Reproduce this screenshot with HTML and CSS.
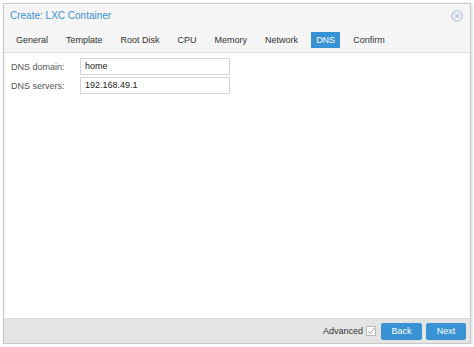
FILE: index.html
```html
<!DOCTYPE html>
<html>
<head>
<meta charset="utf-8">
<link rel="stylesheet" href="styles.css">
</head>
<body>
<div class="window">
  <div class="header">
    <div class="title">Create: LXC Container</div>
    <svg class="close" width="12" height="12" viewBox="0 0 12 12">
      <circle cx="6" cy="6" r="5.2" fill="none" stroke="#a9bfdc" stroke-width="1.1"/>
      <path d="M3.9 3.9 L8.1 8.1 M8.1 3.9 L3.9 8.1" stroke="#a9bfdc" stroke-width="1.1"/>
    </svg>
  </div>
  <div class="tabs">
    <span class="tab">General</span>
    <span class="tab">Template</span>
    <span class="tab">Root Disk</span>
    <span class="tab">CPU</span>
    <span class="tab">Memory</span>
    <span class="tab">Network</span>
    <span class="tab active">DNS</span>
    <span class="tab">Confirm</span>
  </div>
  <div class="content">
    <div class="row">
      <label class="label">DNS domain:</label>
      <div class="input">home</div>
    </div>
    <div class="row">
      <label class="label">DNS servers:</label>
      <div class="input">192.168.49.1</div>
    </div>
  </div>
  <div class="footer">
    <span class="adv">Advanced</span>
    <svg class="check" width="10" height="10" viewBox="0 0 10 10">
      <rect x="0.5" y="0.5" width="9" height="9" fill="#fff" stroke="#b8b8b8"/>
      <path d="M2 5.2 L4.2 7.4 L8.6 2" fill="none" stroke="#9a9a9a" stroke-width="1"/>
    </svg>
    <button class="btn back">Back</button>
    <button class="btn next">Next</button>
  </div>
</div>
</body>
</html>
```

FILE: styles.css
```css
html, body {
  margin: 0;
  padding: 0;
  background: #ffffff;
}
body {
  font-family: "Liberation Sans", Arial, sans-serif;
  font-size: 9px;
  color: #333;
}
.window {
  margin: 3px 0 0 3px;
  width: 466px;
  height: 339px;
  border: 1px solid #c9c9c9;
  background: #f5f5f5;
  box-shadow: 1px 1px 3px rgba(0,0,0,0.15);
  display: flex;
  flex-direction: column;
}
.header {
  height: 23px;
  display: flex;
  align-items: center;
  justify-content: space-between;
  padding: 0 6px 0 6px;
}
.title {
  font-size: 10px;
  color: #3b8fd4;
}
.close {
  margin-right: 1px;
  margin-top: 1px;
}
.tabs {
  height: 25px;
  display: flex;
  align-items: center;
  padding-left: 7px;
  gap: 8px;
  border-bottom: 1px solid #dddddd;
}
.tab {
  padding: 3px 5px;
  line-height: 10px;
  color: #333;
}
.tab.active {
  background: #3892d4;
  color: #fff;
}
.content {
  flex: 1;
  background: #fff;
  margin: 0 1px;
  padding: 5px 6px;
  display: flex;
  flex-direction: column;
  gap: 2px;
}
.row {
  display: flex;
  align-items: center;
}
.label {
  width: 69px;
  color: #555;
}
.input {
  width: 144px;
  height: 15px;
  line-height: 15px;
  border: 1px solid #d5d5d5;
  padding-left: 4px;
  color: #222;
}
.footer {
  height: 24px;
  background: #e4e4e4;
  border-top: 1px solid #dadada;
  display: flex;
  align-items: center;
  justify-content: flex-end;
  padding-right: 4px;
}
.adv {
  color: #333;
  margin-right: 3px;
}
.check {
  margin-right: 1px;
}
.btn {
  font-family: "Liberation Sans", Arial, sans-serif;
  font-size: 9px;
  background: #3892d4;
  color: #fff;
  border: none;
  border-radius: 2px;
  height: 17px;
  padding: 0;
  margin-left: 4px;
}
.back { width: 41px; }
.next { width: 40px; }
```
